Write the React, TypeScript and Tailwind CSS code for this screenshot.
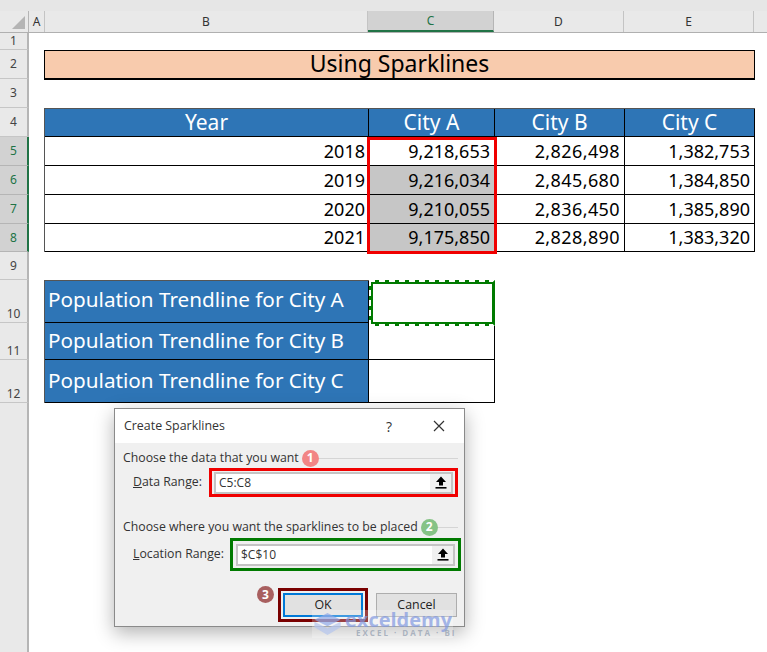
const sheetFont = { fontFamily: '"Noto Sans", "DejaVu Sans", sans-serif' };

const columns = ["A", "B", "C", "D", "E"];
const colWidths = ["w-[16px]", "w-[323px]", "w-[126px]", "w-[130px]", "w-[130px]"];

const dataRows = [
  { row: 5, height: "h-[29px]", year: "2018", a: "9,218,653", b: "2,826,498", c: "1,382,753", gray: false },
  { row: 6, height: "h-[29px]", year: "2019", a: "9,216,034", b: "2,845,680", c: "1,384,850", gray: true },
  { row: 7, height: "h-[29px]", year: "2020", a: "9,210,055", b: "2,836,450", c: "1,385,890", gray: true },
  { row: 8, height: "h-[28px]", year: "2021", a: "9,175,850", b: "2,828,890", c: "1,383,320", gray: true },
];

function RowHead({ n, active, tall }: { n: number; active?: boolean; tall?: boolean }) {
  return (
    <div
      className={`w-[29px] shrink-0 h-full flex justify-center text-[12px] leading-[16px] border-b border-r-2 ${
        tall ? "items-end" : "items-center"
      } ${active ? "bg-[#d2d2d2] text-[#217346] border-b-[#b5b5b5] border-r-[#217346]" : "bg-[#e9e9e9] text-[#444] border-b-[#c6c6c6] border-r-[#b5b5b5]"}`}
    >
      {n}
    </div>
  );
}

function Badge({ n, color }: { n: number; color: string }) {
  return (
    <span className={`w-[17px] h-[17px] rounded-full shrink-0 flex items-center justify-center text-white text-[12px] font-bold leading-none ${color}`}>
      {n}
    </span>
  );
}

function RangeInput({ value }: { value: string }) {
  return (
    <div className="flex-1 h-[22px] flex items-center justify-between bg-white border-2 border-[#c4c4c4]">
      <span className="pl-[3px] text-[12px] text-[#333]">{value}</span>
      <span className="w-[21px] h-[18px] bg-[#f0f0f0] flex items-center justify-center">
        <svg width="12" height="13" viewBox="0 0 12 13">
          <path d="M6 0.5L11 6H8V9.5H4V6H1z" fill="#000" />
          <rect x="0.5" y="11" width="11" height="1.6" fill="#000" />
        </svg>
      </span>
    </div>
  );
}

function Dialog() {
  return (
    <div
      className="absolute left-[114px] top-[408px] w-[351px] h-[219px] border border-[#8a8a8a] bg-[#f0f0f0] shadow-[0_6px_18px_rgba(0,0,0,0.3)] flex flex-col"
      style={{ fontFamily: '"Open Sans", "Noto Sans", sans-serif' }}
    >
      <div className="h-[34px] shrink-0 bg-white flex items-center pl-[9px] text-[12.4px] text-[#333]">
        <span className="flex-1">Create Sparklines</span>
        <span className="w-[14px] text-[14px] text-[#333] mr-[33px]">?</span>
        <svg width="12" height="12" viewBox="0 0 12 12" className="mr-[19px]">
          <path d="M1 1l10 10M11 1L1 11" stroke="#333" strokeWidth="1.2" />
        </svg>
      </div>

      <div className="flex-1 flex flex-col pl-[8px] pr-[6px] text-[12.3px] text-[#333]">
        <div className="flex items-center h-[16px] mt-[7px]">
          <span>Choose the data that you want</span>
          <span className="ml-[3px]"><Badge n={1} color="bg-[#f28585]" /></span>
          <span className="flex-1 h-px bg-[#d5d5d5]" />
        </div>
        <div className="flex items-center mt-[2px]">
          <span className="ml-[10px] w-[76px] shrink-0 whitespace-nowrap"><u>D</u>ata Range:</span>
          <div className="flex-1 h-[29px] border-[3px] border-[#f00000] flex items-center px-[2px]">
            <RangeInput value="C5:C8" />
          </div>
        </div>

        <div className="flex items-center h-[16px] mt-[22px]">
          <span className="whitespace-nowrap">Choose where you want the sparklines to be placed</span>
          <span className="ml-[3px]"><Badge n={2} color="bg-[#86c386]" /></span>
          <span className="flex-1 h-px bg-[#d5d5d5]" />
        </div>
        <div className="flex items-center mt-[3px]">
          <span className="ml-[10px] w-[97px] shrink-0 whitespace-nowrap"><u>L</u>ocation Range:</span>
          <div className="w-[231px] shrink-0 h-[33px] border-[3px] border-[#007a00] flex items-center px-[3px]">
            <RangeInput value="$C$10" />
          </div>
        </div>

        <div className="flex items-start mt-[17px]">
          <span className="ml-[134px] mr-[4px] -mt-[2px]"><Badge n={3} color="bg-[#a85f5f]" /></span>
          <div className="w-[90px] h-[34px] border-[3px] border-[#7a0000] flex items-center justify-center">
            <button className="w-[80px] h-[24px] border-2 border-[#0078d7] bg-[#e1e1e1] text-[12.4px] text-[#222]">OK</button>
          </div>
          <button className="ml-[8px] mt-[5px] w-[81px] h-[24px] border border-[#adadad] bg-[#e1e1e1] text-[12.4px] text-[#222]">Cancel</button>
        </div>
      </div>

      {/* watermark */}
      <div className="absolute left-[197px] top-[201px] w-[141px] h-[28px] bg-white/25 flex items-center pl-[1px] gap-[3px]">
        <svg width="29" height="24" viewBox="0 0 26 22" className="shrink-0">
          <path d="M13 1l12 6-12 6L1 7z" fill="#8fa8e8" opacity="0.7" />
          <path d="M1 9l12 6 12-6v5l-12 7-12-7z" fill="#b4c4ee" opacity="0.7" />
        </svg>
        <div className="flex flex-col leading-none">
          <span className="text-[20px] font-bold text-[#7f97e0]/70 leading-[17px]">exceldemy</span>
          <span className="text-[8px] font-bold tracking-[2px] text-[#9aa5b5]/80 mt-[1px] ml-[11px] whitespace-nowrap">EXCEL · DATA · BI</span>
        </div>
      </div>
    </div>
  );
}

export default function App() {
  const cellBase = "h-full shrink-0 flex items-center";
  const gridLine = "border-b border-r border-black";

  return (
    <div className="relative w-[767px] h-[652px] overflow-hidden bg-white text-black" style={sheetFont}>
      {/* ribbon remainder */}
      <div className="h-[11px] bg-[#e6e6e6]" />

      {/* column headers */}
      <div className="flex h-[22px] bg-[#e9e9e9] border-b border-[#b0b0b0] text-[12px] text-[#333]">
        <div className="w-[29px] shrink-0 border-r border-[#b5b5b5] flex items-end justify-end">
          <div className="w-0 h-0 mr-[3px] mb-[3px] border-l-[13px] border-l-transparent border-b-[13px] border-b-[#b4b4b4]" />
        </div>
        {columns.map((c, i) => (
          <div
            key={c}
            className={`${colWidths[i]} shrink-0 flex items-center justify-center border-r ${
              c === "C" ? "bg-[#d2d2d2] text-[#217346] border-b-2 border-b-[#217346] border-r-[#b5b5b5]" : "border-[#c4c4c4]"
            }`}
          >
            {c}
          </div>
        ))}
      </div>

      <div className="flex h-[17px]"><RowHead n={1} /></div>

      <div className="flex h-[29px]">
        <RowHead n={2} />
        <div className="w-[15px] shrink-0" />
        <div className="w-[711px] h-[30px] shrink-0 bg-[#f8cbad] border border-black border-b-[2px] flex items-center justify-center pb-[2px] text-[23px] leading-none">
          Using Sparklines
        </div>
      </div>

      <div className="flex h-[29px]"><RowHead n={3} /></div>

      <div className="flex h-[29px]">
        <RowHead n={4} />
        <div className="w-[15px] shrink-0" />
        <div className="flex h-full bg-[#2e75b6] border-t border-l border-[#555] text-white text-[21px]">
          <div className={`${cellBase} ${gridLine} w-[324px] justify-center`}>Year</div>
          <div className={`${cellBase} ${gridLine} w-[126px] justify-center`}>City A</div>
          <div className={`${cellBase} ${gridLine} w-[130px] justify-center`}>City B</div>
          <div className={`${cellBase} ${gridLine} w-[130px] justify-center`}>City C</div>
        </div>
      </div>

      {dataRows.map((r) => (
        <div key={r.row} className={`flex ${r.height}`}>
          <RowHead n={r.row} active />
          <div className="w-[15px] shrink-0" />
          <div className="flex h-full border-l border-[#555] text-[18px]">
            <div className={`${cellBase} ${gridLine} w-[324px] justify-end pr-[3px]`}>{r.year}</div>
            <div className={`${cellBase} ${gridLine} w-[126px] justify-end pr-[4px] ${r.gray ? "bg-[#c6c6c6]" : ""}`}>{r.a}</div>
            <div className={`${cellBase} ${gridLine} w-[130px] justify-end pr-[4px] tracking-[0.4px]`}>{r.b}</div>
            <div className={`${cellBase} ${gridLine} w-[130px] justify-end pr-[4px]`}>{r.c}</div>
          </div>
        </div>
      ))}

      <div className="flex h-[28px]"><RowHead n={9} /></div>

      {[
        { n: 10, h: "h-[43px]", label: "Population Trendline for City A", pad: "pb-[3px]" },
        { n: 11, h: "h-[37px]", label: "Population Trendline for City B", pad: "" },
        { n: 12, h: "h-[43px]", label: "Population Trendline for City C", pad: "" },
      ].map((r) => (
        <div key={r.n} className={`flex ${r.h}`}>
          <RowHead n={r.n} tall />
          <div className="w-[15px] shrink-0" />
          <div className={`flex h-full border-l border-[#555] ${r.n === 10 ? "border-t" : ""}`}>
            <div className={`${cellBase} ${gridLine} ${r.pad} w-[324px] bg-[#2e75b6] text-white text-[20.7px] pl-[3px] whitespace-nowrap`}>{r.label}</div>
            <div className={`${cellBase} ${gridLine} w-[126px]`} />
          </div>
        </div>
      ))}

      <div className="flex h-[249px]"><div className="w-[29px] bg-[#e9e9e9] border-r-2 border-[#b5b5b5]" /></div>

      {/* range highlights over the sheet */}
      <div className="absolute left-[367px] top-[137px] w-[130px] h-[117px] border-[3px] border-[#f00000]" />
      <div className="absolute left-[369px] top-[280px] w-[126px] h-[46px] border-2 border-dashed border-white border-r-[#007a00] bg-[#007a00] p-[2px] pr-[1px]">
        <div className="w-full h-full bg-white" />
      </div>

      <Dialog />
    </div>
  );
}
